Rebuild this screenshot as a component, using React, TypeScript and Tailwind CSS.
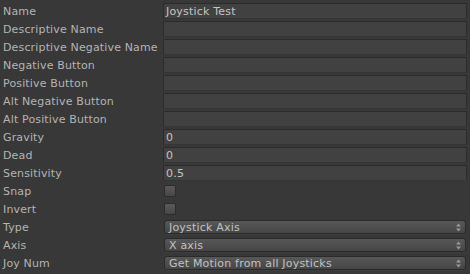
import React from 'react';

type Row =
  | { label: string; kind: 'text'; value?: string }
  | { label: string; kind: 'check' }
  | { label: string; kind: 'select'; value: string };

const rows: Row[] = [
  { label: 'Name', kind: 'text', value: 'Joystick Test' },
  { label: 'Descriptive Name', kind: 'text' },
  { label: 'Descriptive Negative Name', kind: 'text' },
  { label: 'Negative Button', kind: 'text' },
  { label: 'Positive Button', kind: 'text' },
  { label: 'Alt Negative Button', kind: 'text' },
  { label: 'Alt Positive Button', kind: 'text' },
  { label: 'Gravity', kind: 'text', value: '0' },
  { label: 'Dead', kind: 'text', value: '0' },
  { label: 'Sensitivity', kind: 'text', value: '0.5' },
  { label: 'Snap', kind: 'check' },
  { label: 'Invert', kind: 'check' },
  { label: 'Type', kind: 'select', value: 'Joystick Axis' },
  { label: 'Axis', kind: 'select', value: 'X axis' },
  { label: 'Joy Num', kind: 'select', value: 'Get Motion from all Joysticks' },
];

function Arrows() {
  return (
    <svg width="5" height="9" viewBox="0 0 5 9" className="shrink-0">
      <path d="M2.5 0.5 L5 3.5 L0 3.5 Z" fill="#9a9a9a" />
      <path d="M2.5 8.5 L5 5.5 L0 5.5 Z" fill="#9a9a9a" />
    </svg>
  );
}

function Field({ row }: { row: Row }) {
  if (row.kind === 'check') {
    return (
      <div className="ml-[1px] w-[12px] h-[12px] rounded-[2px] border border-[#2c2c2c] bg-gradient-to-b from-[#5a5a5a] to-[#474747]" />
    );
  }
  if (row.kind === 'select') {
    return (
      <div className="ml-[1px] mr-[1px] h-[14px] flex items-center justify-between rounded-[3px] border border-[#2a2a2a] bg-gradient-to-b from-[#585858] to-[#464646] pl-[4px] pr-[4px] shadow-[0_1px_0_#3e3e3e]">
        <span className="text-[11px] leading-none tracking-[0.2px] text-[#c2c2c2]">{row.value}</span>
        <Arrows />
      </div>
    );
  }
  return (
    <div className="h-[16px] flex items-center border border-[#2b2b2b] border-b-[#353535] bg-[#414141] pl-[2px]">
      <span className="text-[11px] leading-none tracking-[0.2px] text-[#c4c4c4]">{row.value}</span>
    </div>
  );
}

export default function App() {
  return (
    <div
      className="w-[470px] h-[274px] bg-[#383838] pt-[2px] pl-[3px] pr-[3px] overflow-hidden"
      style={{ fontFamily: '"DejaVu Sans", Verdana, sans-serif' }}
    >
      {rows.map((row) => (
        <div key={row.label} className="h-[18px] flex items-center">
          <div className="w-[160px] shrink-0 text-[11px] leading-none tracking-[0.15px] text-[#b4b4b4] whitespace-nowrap">
            {row.label}
          </div>
          <div className="flex-1">
            <Field row={row} />
          </div>
        </div>
      ))}
    </div>
  );
}
